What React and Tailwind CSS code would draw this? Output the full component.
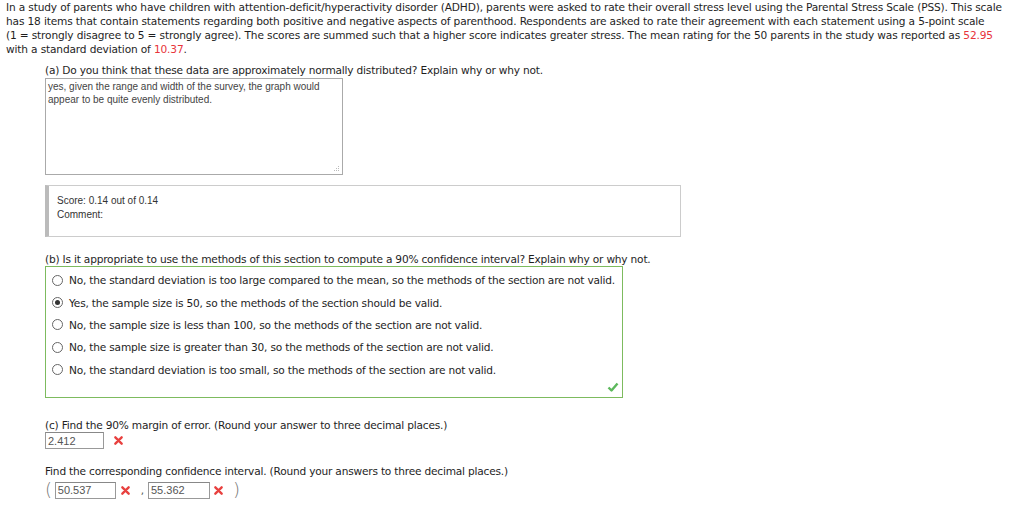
import React from 'react';

const options = [
    'No, the standard deviation is too large compared to the mean, so the methods of the section are not valid.',
    'Yes, the sample size is 50, so the methods of the section should be valid.',
    'No, the sample size is less than 100, so the methods of the section are not valid.',
    'No, the sample size is greater than 30, so the methods of the section are not valid.',
    'No, the standard deviation is too small, so the methods of the section are not valid.',
];

function Cross() {
    return (
        <svg className="w-[9px] h-[9px] shrink-0" viewBox="0 0 10 10">
            <path d="M1.5 1.5L8.5 8.5M8.5 1.5L1.5 8.5" stroke="#e8413f" strokeWidth={2.6} strokeLinecap="round" />
        </svg>
    );
}

function Field({ value, width }) {
    return (
        <div className={`${width} h-[17px] border border-[#999] border-t-[#888] bg-white flex items-center px-[2px] text-[11px] tracking-normal text-[#555] font-['Liberation_Sans',Arial,sans-serif]`}>
            {value}
        </div>
    );
}

export default function App() {
    return (
        <div className="w-[1024px] h-[509px] bg-white text-[#1e1e1e] text-[10.6px] tracking-[-0.2px] leading-[14px] font-['DejaVu_Sans',Verdana,sans-serif] overflow-hidden">
            {/* Intro */}
            <div className="px-[6px] whitespace-nowrap tracking-[-0.15px]">
                In a study of parents who have children with attention-deficit/hyperactivity disorder (ADHD), parents were asked to rate their overall stress level using the Parental Stress Scale (PSS). This scale<br />
                has 18 items that contain statements regarding both positive and negative aspects of parenthood. Respondents are asked to rate their agreement with each statement using a 5-point scale<br />
                (1 = strongly disagree to 5 = strongly agree). The scores are summed such that a higher score indicates greater stress. The mean rating for the 50 parents in the study was reported as <span className="text-[#e8343a]">52.95</span><br />
                with a standard deviation of <span className="text-[#e8343a]">10.37</span>.
            </div>

            <div className="pl-[45px]">
                {/* Part a */}
                <div className="mt-[7px]">(a) Do you think that these data are approximately normally distributed? Explain why or why not.</div>
                <div className="relative w-[298px] h-[97px] mt-[1px] border border-[#aaa] px-[2px] pt-[1px] text-[10px] tracking-normal leading-[13px] text-[#444] font-['Liberation_Sans',Arial,sans-serif]">
                    yes, given the range and width of the survey, the graph would<br />
                    appear to be quite evenly distributed.
                    <svg className="absolute right-[2px] bottom-[2px] w-[6px] h-[6px]" viewBox="0 0 6 6">
                        <rect x="4" y="0" width="1" height="1" fill="#bbb" />
                        <rect x="2" y="2" width="1" height="1" fill="#bbb" />
                        <rect x="4" y="2" width="1" height="1" fill="#bbb" />
                        <rect x="0" y="4" width="1" height="1" fill="#bbb" />
                        <rect x="2" y="4" width="1" height="1" fill="#bbb" />
                        <rect x="4" y="4" width="1" height="1" fill="#bbb" />
                    </svg>
                </div>

                {/* Score */}
                <div className="w-[636px] h-[52px] mt-[10px] border border-[#ccc] border-l-[4px] border-l-[#bbb] pl-[8px] pt-[8px] text-[10px] tracking-normal leading-[14px] text-[#333] font-['Liberation_Sans',Arial,sans-serif]">
                    <div>Score: 0.14 out of 0.14</div>
                    <div>Comment:</div>
                </div>

                {/* Part b */}
                <div className="mt-[15px]">(b) Is it appropriate to use the methods of this section to compute a 90% confidence interval? Explain why or why not.</div>
                <div className="relative w-[578px] h-[132px] border border-[#7dbb5e] pl-[6px] pt-[6px] flex flex-col gap-[8px]">
                    {options.map((o, i) => (
                        <div key={i} className="flex items-center gap-[6px] h-[14.4px] whitespace-nowrap">
                            <span className="w-[11px] h-[11px] shrink-0 rounded-full border border-[#666] flex items-center justify-center bg-white">
                                {i === 1 && <span className="w-[5px] h-[5px] rounded-full bg-[#333]" />}
                            </span>
                            <span>{o}</span>
                        </div>
                    ))}
                    <svg className="absolute right-[3px] bottom-[5px] w-[12px] h-[10px]" viewBox="0 0 12 10">
                        <path d="M1.5 5.5L4.5 8.5L10.5 1.5" stroke="#5cb85c" strokeWidth={2.4} fill="none" strokeLinejoin="round" />
                    </svg>
                </div>

                {/* Part c */}
                <div className="mt-[20px]">(c) Find the 90% margin of error. (Round your answer to three decimal places.)</div>
                <div className="flex items-center gap-[10px]">
                    <Field value="2.412" width="w-[59px]" />
                    <Cross />
                </div>

                <div className="mt-[15px]">Find the corresponding confidence interval. (Round your answers to three decimal places.)</div>
                <div className="flex items-center mt-[3px] h-[18px]">
                    <span className="text-[18px] leading-[18px] text-[#777] font-light mr-[3px]">(</span>
                    <Field value="50.537" width="w-[61px]" />
                    <span className="ml-[5px]"><Cross /></span>
                    <span className="ml-[11px] mr-[4px] text-[#555]">,</span>
                    <Field value="55.362" width="w-[62px]" />
                    <span className="ml-[4px]"><Cross /></span>
                    <span className="ml-[10px] text-[18px] leading-[18px] text-[#777] font-light">)</span>
                </div>
            </div>
        </div>
    );
}
